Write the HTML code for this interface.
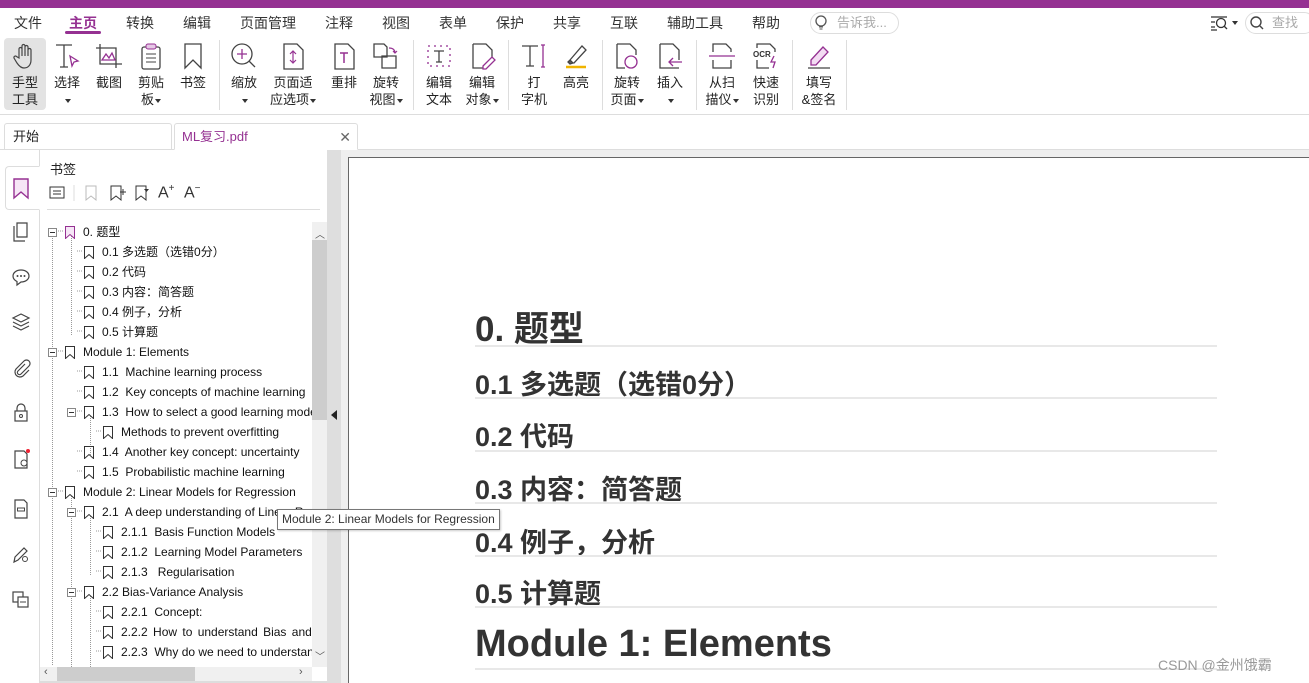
<!DOCTYPE html>
<html><head><meta charset="utf-8"><style>
*{margin:0;padding:0;box-sizing:border-box}
body{width:1309px;height:683px;overflow:hidden;position:relative;background:#fff;font-family:"Liberation Sans","Noto Sans CJK SC",sans-serif;color:#222}
.a{position:absolute}
.menu span{position:absolute;top:13px;font-size:14px;color:#333;transform:translateX(-50%);white-space:nowrap}
.rb{position:absolute;top:38px;width:42px;text-align:center;font-size:13px;line-height:17px;color:#222;transform:translateX(-50%)}
.rb svg{display:block;margin:4px auto 4px;width:28px;height:28px}
.sep{position:absolute;top:40px;width:1px;height:70px;background:#ddd}
.tri{display:inline-block;width:0;height:0;border-left:3px solid transparent;border-right:3px solid transparent;border-top:4px solid #333;vertical-align:middle;margin-left:1px}
.row{position:absolute;height:20px;font-size:12px;line-height:20px;color:#111;white-space:nowrap}
.bm{position:absolute;width:10px;height:13px;top:4px}
.ex{position:absolute;width:9px;height:9px;border:1px solid #888;background:#fff;top:6px}
.ex:after{content:"";position:absolute;left:1px;top:3px;width:5px;height:1px;background:#333}
.h{position:absolute;left:475px;font-weight:bold;color:#333;white-space:nowrap}
.ln{position:absolute;left:475px;width:742px;height:2px;background:#e8e8e8}
.li{position:absolute;left:11px;width:20px;height:20px}
</style></head><body>
<div class="a" style="left:0;top:0;width:1309px;height:8px;background:#953192"></div>
<div class="menu">
<span style="left:28px">文件</span>
<span style="left:83px;color:#953192;font-weight:bold">主页</span>
<span style="left:140px">转换</span><span style="left:197px">编辑</span><span style="left:268px">页面管理</span><span style="left:339px">注释</span><span style="left:396px">视图</span><span style="left:453px">表单</span><span style="left:510px">保护</span><span style="left:567px">共享</span><span style="left:624px">互联</span><span style="left:695px">辅助工具</span><span style="left:766px">帮助</span>
</div>
<div class="a" style="left:65px;top:31px;width:36px;height:3px;border-radius:2px;background:#953192"></div>
<div class="a" style="left:810px;top:12px;width:89px;height:22px;border:1px solid #ddd;border-radius:11px;font-size:13px;color:#aaa;padding-left:26px;line-height:20px">告诉我...</div>
<svg class="a" style="left:814px;top:15px" width="14" height="16"><circle cx="7" cy="6" r="5" fill="none" stroke="#555" stroke-width="1.3"/><path d="M5 12h4M5.5 14h3" stroke="#555"/></svg>
<svg class="a" style="left:1210px;top:15px" width="30" height="16"><path d="M1 2h16M1 7h4M1 12h4M1 15h6" stroke="#333" stroke-width="1.2"/><circle cx="11" cy="8" r="4.5" fill="none" stroke="#333" stroke-width="1.3"/><path d="M14 11l3 3" stroke="#333" stroke-width="1.3"/><path d="M22 6h6l-3 4z" fill="#333"/></svg>
<div class="a" style="left:1245px;top:12px;width:70px;height:22px;border:1px solid #ddd;border-radius:11px;font-size:13px;color:#aaa;padding-left:26px;line-height:20px">查找</div>
<svg class="a" style="left:1250px;top:16px" width="14" height="14"><circle cx="6" cy="6" r="5" fill="none" stroke="#444" stroke-width="1.4"/><path d="M10 10l3 3" stroke="#444" stroke-width="1.4"/></svg>

<div class="a" style="left:4px;top:38px;width:42px;height:72px;background:#e3e3e3;border-radius:4px"></div>
<div class="rb" style="left:25px"><svg viewBox="0 0 28 28"><path d="M8 16V7a1.5 1.5 0 013 0v7V4a1.5 1.5 0 013 0v10V5a1.5 1.5 0 013 0v9V8a1.5 1.5 0 013 0v10c0 5-3 8-7 8-3 0-5-2-7-5l-3-5a1.5 1.5 0 012.5-1.5z" fill="none" stroke="#444" stroke-width="1.2"/></svg>手型<br>工具</div>
<div class="rb" style="left:67px"><svg viewBox="0 0 28 28"><path d="M3 3h16M11 3v22M7 25h8" stroke="#444" stroke-width="1.3" fill="none"/><path d="M17 14l8 5-4 1-2 4z" fill="none" stroke="#953192" stroke-width="1.3"/></svg>选择<br><span class="tri"></span></div>
<div class="rb" style="left:109px"><svg viewBox="0 0 28 28"><path d="M5 2v20h22M1 6h20v20" stroke="#444" stroke-width="1.3" fill="none"/><path d="M7 18l4-6 3 4 3-5 3 7z" fill="none" stroke="#953192" stroke-width="1.3"/></svg>截图</div>
<div class="rb" style="left:151px"><svg viewBox="0 0 28 28"><rect x="5" y="5" width="18" height="22" rx="2" fill="none" stroke="#444" stroke-width="1.3"/><rect x="9" y="2" width="10" height="5" rx="2" fill="#e6c8e6" stroke="#953192"/><path d="M9 12h10M9 16h10M9 20h10" stroke="#444"/></svg>剪贴<br>板<span class="tri"></span></div>
<div class="rb" style="left:193px"><svg viewBox="0 0 28 28"><path d="M6 2h16v24l-8-8-8 8z" fill="none" stroke="#444" stroke-width="1.3"/></svg>书签</div>
<div class="sep" style="left:219px"></div>
<div class="rb" style="left:244px"><svg viewBox="0 0 28 28"><circle cx="12" cy="12" r="10" fill="none" stroke="#444" stroke-width="1.3"/><path d="M12 7v10M7 12h10" stroke="#953192" stroke-width="1.3"/><path d="M19 19l6 6" stroke="#444" stroke-width="1.3"/></svg>缩放<br><span class="tri"></span></div>
<div class="rb" style="left:293px;width:50px"><svg viewBox="0 0 28 28"><path d="M5 2h13l6 6v19H5z" fill="none" stroke="#444" stroke-width="1.3"/><path d="M14 9v12M11 12l3-3 3 3M11 18l3 3 3-3" fill="none" stroke="#953192" stroke-width="1.2"/></svg>页面适<br>应选项<span class="tri"></span></div>
<div class="rb" style="left:344px"><svg viewBox="0 0 28 28"><path d="M5 2h13l6 6v19H5z" fill="none" stroke="#444" stroke-width="1.3"/><path d="M10 11h8M14 11v10" stroke="#953192" stroke-width="1.5"/></svg>重排</div>
<div class="rb" style="left:386px"><svg viewBox="0 0 28 28"><path d="M2 2h10l3 3v10H2z" fill="none" stroke="#444" stroke-width="1.3"/><path d="M10 14h14v12H10z" fill="none" stroke="#444" stroke-width="1.3"/><path d="M17 6c4 0 6 2 6 5M21 9l2 2 2-2" fill="none" stroke="#953192" stroke-width="1.2"/></svg>旋转<br>视图<span class="tri"></span></div>
<div class="sep" style="left:413px"></div>
<div class="rb" style="left:439px"><svg viewBox="0 0 28 28"><rect x="3" y="4" width="22" height="20" fill="none" stroke="#953192" stroke-width="1.3" stroke-dasharray="2 4"/><path d="M9 9h10M14 9v11M11 20h6" stroke="#444" stroke-width="1.3"/></svg>编辑<br>文本</div>
<div class="rb" style="left:482px"><svg viewBox="0 0 28 28"><path d="M5 2h13l6 6v8M5 2v24h10" fill="none" stroke="#444" stroke-width="1.3"/><path d="M15 24l9-9 3 3-9 9h-3z" fill="none" stroke="#953192" stroke-width="1.3"/></svg>编辑<br>对象<span class="tri"></span></div>
<div class="sep" style="left:508px"></div>
<div class="rb" style="left:534px"><svg viewBox="0 0 28 28"><path d="M2 4h16M10 4v20M6 24h8" stroke="#444" stroke-width="1.3"/><path d="M23 3v22M21 3h4M21 25h4" stroke="#953192" stroke-width="1.3"/></svg>打<br>字机</div>
<div class="rb" style="left:576px"><svg viewBox="0 0 28 28"><path d="M8 18l12-14 4 4-12 13h-4zM6 20l2-2 3 3-3 1z" fill="none" stroke="#444" stroke-width="1.3"/><path d="M4 25h20" stroke="#f0b400" stroke-width="2.5"/></svg>高亮</div>
<div class="sep" style="left:602px"></div>
<div class="rb" style="left:627px"><svg viewBox="0 0 28 28"><path d="M4 2h13l6 6v5M4 2v24h8" fill="none" stroke="#444" stroke-width="1.3"/><circle cx="18" cy="20" r="6" fill="none" stroke="#953192" stroke-width="1.3"/></svg>旋转<br>页面<span class="tri"></span></div>
<div class="rb" style="left:670px"><svg viewBox="0 0 28 28"><path d="M4 2h13l6 6v10M4 2v24h19" fill="none" stroke="#444" stroke-width="1.3"/><path d="M26 20H13M17 16l-4 4 4 4" fill="none" stroke="#953192" stroke-width="1.3"/></svg>插入<br><span class="tri"></span></div>
<div class="sep" style="left:696px"></div>
<div class="rb" style="left:722px"><svg viewBox="0 0 28 28"><path d="M5 10V2h13l5 5v3M5 18v8h18v-8" fill="none" stroke="#444" stroke-width="1.3"/><path d="M1 14h26" stroke="#953192" stroke-width="1.3"/></svg>从扫<br>描仪<span class="tri"></span></div>
<div class="rb" style="left:766px"><svg viewBox="0 0 28 28"><path d="M5 6V2h13l5 5v3M5 18v8h12" fill="none" stroke="#444" stroke-width="1.3"/><text x="1" y="15" font-size="8" font-family="Liberation Sans" fill="#333" font-weight="bold">OCR</text><path d="M22 14l-3 6h4l-2 6" fill="none" stroke="#953192" stroke-width="1.3"/></svg>快速<br>识别</div>
<div class="sep" style="left:792px"></div>
<div class="rb" style="left:819px;width:50px"><svg viewBox="0 0 28 28"><path d="M6 18l12-13 5 5-12 13h-5z" fill="#f3dcf3" stroke="#953192" stroke-width="1.3"/><path d="M3 26h22" stroke="#444" stroke-width="1.3"/></svg>填写<br>&amp;签名</div>
<div class="sep" style="left:846px"></div>
<div class="a" style="left:0;top:114px;width:1309px;height:1px;background:#ddd"></div>

<div class="a" style="left:0;top:149px;width:1309px;height:1px;background:#ddd"></div>
<div class="a" style="left:4px;top:123px;width:168px;height:27px;border:1px solid #ddd;border-bottom:none;border-radius:3px 3px 0 0;font-size:13px;line-height:26px;padding-left:8px">开始</div>
<div class="a" style="left:174px;top:123px;width:184px;height:27px;border:1px solid #ddd;border-bottom:1px solid #fff;border-radius:3px 3px 0 0;font-size:13px;line-height:26px;padding-left:7px;color:#953192;background:#fff">ML复习.pdf<span style="position:absolute;right:6px;color:#666;font-size:14px">✕</span></div>

<div class="a" style="left:39px;top:150px;width:1px;height:533px;background:#ddd"></div>
<div class="a" style="left:5px;top:166px;width:35px;height:44px;border:1px solid #ddd;border-right:1px solid #fff;border-radius:4px 0 0 4px;background:#fff"></div>
<svg class="a" style="left:13px;top:178px" width="16" height="22"><path d="M1 1h14v19l-7-6-7 6z" fill="#f6e6f6" stroke="#953192" stroke-width="1.4"/></svg>
<svg class="li" style="top:222px" viewBox="0 0 20 20"><path d="M6 1h10v14H6zM3 4v15h11" fill="none" stroke="#444" stroke-width="1.2"/></svg>
<svg class="li" style="top:267px" viewBox="0 0 20 20"><path d="M10 3c5 0 8 3 8 6s-3 6-8 6l-4 3v-3.5C3 13 2 11 2 9c0-3 3-6 8-6z" fill="none" stroke="#444" stroke-width="1.2"/><circle cx="6.5" cy="9" r="1" fill="#444"/><circle cx="10" cy="9" r="1" fill="#444"/><circle cx="13.5" cy="9" r="1" fill="#444"/></svg>
<svg class="li" style="top:312px" viewBox="0 0 20 20"><path d="M10 2l8 4-8 4-8-4zM2 10l8 4 8-4M2 14l8 4 8-4" fill="none" stroke="#444" stroke-width="1.2"/></svg>
<svg class="li" style="top:358px" viewBox="0 0 20 20"><path d="M14 6l-7 7a2 2 0 003 3l8-8a3.5 3.5 0 00-5-5l-8 8a5 5 0 007 7l6-6" fill="none" stroke="#444" stroke-width="1.2"/></svg>
<svg class="li" style="top:402px" viewBox="0 0 20 20"><path d="M6 9V6a4 4 0 018 0v3" fill="none" stroke="#444" stroke-width="1.2"/><rect x="4" y="9" width="12" height="10" fill="none" stroke="#444" stroke-width="1.2"/><circle cx="10" cy="14" r="1.5" fill="none" stroke="#444"/></svg>
<svg class="li" style="top:449px" viewBox="0 0 20 20"><path d="M4 2h9l3 3v14H4z" fill="none" stroke="#444" stroke-width="1.2"/><circle cx="13" cy="14" r="3" fill="#fff" stroke="#444"/><circle cx="17" cy="2" r="2" fill="#e23"/></svg>
<svg class="li" style="top:499px" viewBox="0 0 20 20"><path d="M4 1h9l3 3v15H4z" fill="none" stroke="#444" stroke-width="1.2"/><rect x="6.5" y="9" width="7" height="3" fill="none" stroke="#444"/></svg>
<svg class="li" style="top:545px" viewBox="0 0 20 20"><path d="M3 17l1-5 9-9 3 3-9 9z" fill="none" stroke="#444" stroke-width="1.2"/><circle cx="14" cy="14" r="2.5" fill="none" stroke="#444"/></svg>
<svg class="li" style="top:590px" viewBox="0 0 20 20"><rect x="2" y="2" width="10" height="10" fill="none" stroke="#444" stroke-width="1.2"/><rect x="7" y="7" width="10" height="10" fill="#fff" stroke="#444" stroke-width="1.2"/><path d="M9 12h6" stroke="#444"/></svg>

<div class="a" style="left:50px;top:159px;font-size:13px">书签</div>
<svg class="a" style="left:49px;top:184px" width="160" height="18"><rect x="1" y="3" width="14" height="11" fill="none" stroke="#333"/><path d="M4 7h8M4 10h8" stroke="#333"/><path d="M25 1v16" stroke="#ddd"/><path d="M37 2h10v14l-5-4-5 4z" fill="none" stroke="#bbb"/><path d="M62 2h10v14l-5-4-5 4z" fill="none" stroke="#333"/><path d="M71 8h6M74 5v6" stroke="#333"/><path d="M87 2h10v14l-5-4-5 4z" fill="none" stroke="#333"/><path d="M95 5h5l-2.5 3z" fill="#333"/></svg>
<div class="a" style="left:158px;top:183px;font-size:16px;color:#333">A<sup style="font-size:10px">+</sup></div>
<div class="a" style="left:184px;top:183px;font-size:16px;color:#333">A<sup style="font-size:10px">−</sup></div>
<div class="a" style="left:47px;top:209px;width:273px;height:1px;background:#ddd"></div>

<div class="a" style="left:40px;top:222px;width:272px;height:445px;overflow:hidden">
<svg class="a" style="left:0;top:0" width="272" height="445">
<g stroke="#999" stroke-dasharray="1 1" fill="none">
<path d="M12.5 14v430M31.5 14v100M50.5 194v40M31.5 274v180M50.5 294v60M50.5 374v80"/>
<path d="M18 9h6M37 29h6M37 49h6M37 69h6M37 89h6M37 109h6M18 129h6M37 149h6M37 169h6M37 189h6M56 209h6M37 229h6M37 249h6M18 269h6M37 289h6M56 309h6M56 329h6M56 349h6M37 369h6M56 389h6M56 409h6M56 429h6"/>
</g></svg>
</div>
<div class="a" style="left:40px;top:222px;width:272px;height:445px;overflow:hidden">
<div class="ex" style="left:8px;top:6px"></div><svg class="bm" style="left:25px;top:4px" viewBox="0 0 10 13"><path d="M.5.5h9v12l-4.5-4-4.5 4z" fill="#f6e6f6" stroke="#953192"/></svg><div class="row" style="top:0;left:43px">0. 题型</div>
<svg class="bm" style="left:44px;top:24px" viewBox="0 0 10 13"><path d="M.5.5h9v12l-4.5-4-4.5 4z" fill="none" stroke="#333"/></svg><div class="row" style="top:20px;left:62px">0.1 多选题（选错0分）</div>
<svg class="bm" style="left:44px;top:44px" viewBox="0 0 10 13"><path d="M.5.5h9v12l-4.5-4-4.5 4z" fill="none" stroke="#333"/></svg><div class="row" style="top:40px;left:62px">0.2 代码</div>
<svg class="bm" style="left:44px;top:64px" viewBox="0 0 10 13"><path d="M.5.5h9v12l-4.5-4-4.5 4z" fill="none" stroke="#333"/></svg><div class="row" style="top:60px;left:62px">0.3 内容：简答题</div>
<svg class="bm" style="left:44px;top:84px" viewBox="0 0 10 13"><path d="M.5.5h9v12l-4.5-4-4.5 4z" fill="none" stroke="#333"/></svg><div class="row" style="top:80px;left:62px">0.4 例子，分析</div>
<svg class="bm" style="left:44px;top:104px" viewBox="0 0 10 13"><path d="M.5.5h9v12l-4.5-4-4.5 4z" fill="none" stroke="#333"/></svg><div class="row" style="top:100px;left:62px">0.5 计算题</div>
<div class="ex" style="left:8px;top:126px"></div><svg class="bm" style="left:25px;top:124px" viewBox="0 0 10 13"><path d="M.5.5h9v12l-4.5-4-4.5 4z" fill="none" stroke="#333"/></svg><div class="row" style="top:120px;left:43px">Module 1: Elements</div>
<svg class="bm" style="left:44px;top:144px" viewBox="0 0 10 13"><path d="M.5.5h9v12l-4.5-4-4.5 4z" fill="none" stroke="#333"/></svg><div class="row" style="top:140px;left:62px">1.1&nbsp; Machine learning process</div>
<svg class="bm" style="left:44px;top:164px" viewBox="0 0 10 13"><path d="M.5.5h9v12l-4.5-4-4.5 4z" fill="none" stroke="#333"/></svg><div class="row" style="top:160px;left:62px">1.2&nbsp; Key concepts of machine learning</div>
<div class="ex" style="left:27px;top:186px"></div><svg class="bm" style="left:44px;top:184px" viewBox="0 0 10 13"><path d="M.5.5h9v12l-4.5-4-4.5 4z" fill="none" stroke="#333"/></svg><div class="row" style="top:180px;left:62px">1.3&nbsp; How to select a good learning model</div>
<svg class="bm" style="left:63px;top:204px" viewBox="0 0 10 13"><path d="M.5.5h9v12l-4.5-4-4.5 4z" fill="none" stroke="#333"/></svg><div class="row" style="top:200px;left:81px">Methods to prevent overfitting</div>
<svg class="bm" style="left:44px;top:224px" viewBox="0 0 10 13"><path d="M.5.5h9v12l-4.5-4-4.5 4z" fill="none" stroke="#333"/></svg><div class="row" style="top:220px;left:62px">1.4&nbsp; Another key concept: uncertainty</div>
<svg class="bm" style="left:44px;top:244px" viewBox="0 0 10 13"><path d="M.5.5h9v12l-4.5-4-4.5 4z" fill="none" stroke="#333"/></svg><div class="row" style="top:240px;left:62px">1.5&nbsp; Probabilistic machine learning</div>
<div class="ex" style="left:8px;top:266px"></div><svg class="bm" style="left:25px;top:264px" viewBox="0 0 10 13"><path d="M.5.5h9v12l-4.5-4-4.5 4z" fill="none" stroke="#333"/></svg><div class="row" style="top:260px;left:43px">Module 2: Linear Models for Regression</div>
<div class="ex" style="left:27px;top:286px"></div><svg class="bm" style="left:44px;top:284px" viewBox="0 0 10 13"><path d="M.5.5h9v12l-4.5-4-4.5 4z" fill="none" stroke="#333"/></svg><div class="row" style="top:280px;left:62px">2.1&nbsp; A deep understanding of Linear Regression</div>
<svg class="bm" style="left:63px;top:304px" viewBox="0 0 10 13"><path d="M.5.5h9v12l-4.5-4-4.5 4z" fill="none" stroke="#333"/></svg><div class="row" style="top:300px;left:81px">2.1.1&nbsp; Basis Function Models</div>
<svg class="bm" style="left:63px;top:324px" viewBox="0 0 10 13"><path d="M.5.5h9v12l-4.5-4-4.5 4z" fill="none" stroke="#333"/></svg><div class="row" style="top:320px;left:81px">2.1.2&nbsp; Learning Model Parameters</div>
<svg class="bm" style="left:63px;top:344px" viewBox="0 0 10 13"><path d="M.5.5h9v12l-4.5-4-4.5 4z" fill="none" stroke="#333"/></svg><div class="row" style="top:340px;left:81px">2.1.3&nbsp;&nbsp; Regularisation</div>
<div class="ex" style="left:27px;top:366px"></div><svg class="bm" style="left:44px;top:364px" viewBox="0 0 10 13"><path d="M.5.5h9v12l-4.5-4-4.5 4z" fill="none" stroke="#333"/></svg><div class="row" style="top:360px;left:62px">2.2 Bias-Variance Analysis</div>
<svg class="bm" style="left:63px;top:384px" viewBox="0 0 10 13"><path d="M.5.5h9v12l-4.5-4-4.5 4z" fill="none" stroke="#333"/></svg><div class="row" style="top:380px;left:81px">2.2.1&nbsp; Concept:</div>
<svg class="bm" style="left:63px;top:404px" viewBox="0 0 10 13"><path d="M.5.5h9v12l-4.5-4-4.5 4z" fill="none" stroke="#333"/></svg><div class="row" style="top:400px;left:81px;word-spacing:2px">2.2.2 How to understand Bias and Variance</div>
<svg class="bm" style="left:63px;top:424px" viewBox="0 0 10 13"><path d="M.5.5h9v12l-4.5-4-4.5 4z" fill="none" stroke="#333"/></svg><div class="row" style="top:420px;left:81px">2.2.3&nbsp; Why do we need to understand</div>
</div>
<div class="a" style="left:312px;top:222px;width:15px;height:445px;background:#f0f0f0"></div>
<div class="a" style="left:312px;top:240px;width:15px;height:180px;background:#cdcdcd"></div>
<div class="a" style="left:315px;top:226px;font-size:10px;color:#555">︿</div>
<div class="a" style="left:315px;top:648px;font-size:10px;color:#555">﹀</div>
<div class="a" style="left:40px;top:667px;width:272px;height:14px;background:#f0f0f0"></div>
<div class="a" style="left:57px;top:667px;width:138px;height:14px;background:#cdcdcd"></div>
<div class="a" style="left:44px;top:666px;font-size:11px;color:#555">‹</div>
<div class="a" style="left:299px;top:666px;font-size:11px;color:#555">›</div>
<div class="a" style="left:40px;top:681px;width:287px;height:2px;background:#ddd"></div>

<div class="a" style="left:327px;top:150px;width:14px;height:533px;background:#dedede"></div>
<div class="a" style="left:331px;top:410px;width:0;height:0;border-top:5px solid transparent;border-bottom:5px solid transparent;border-right:6px solid #222"></div>
<div class="a" style="left:341px;top:150px;width:968px;height:533px;background:#efefef"></div>
<div class="a" style="left:348px;top:157px;width:961px;height:526px;background:#fff;border-left:1px solid #666;border-top:1px solid #666"></div>

<div class="h" style="top:301px;font-size:35px">0. 题型</div><div class="ln" style="top:345px"></div>
<div class="h" style="top:363px;font-size:27px">0.1 多选题（选错0分）</div><div class="ln" style="top:397px"></div>
<div class="h" style="top:415px;font-size:27px">0.2 代码</div><div class="ln" style="top:450px"></div>
<div class="h" style="top:468px;font-size:27px">0.3 内容：简答题</div><div class="ln" style="top:502px"></div>
<div class="h" style="top:521px;font-size:27px">0.4 例子，分析</div><div class="ln" style="top:555px"></div>
<div class="h" style="top:572px;font-size:27px">0.5 计算题</div><div class="ln" style="top:606px"></div>
<div class="h" style="top:623px;font-size:38px">Module 1: Elements</div><div class="ln" style="top:668px"></div>
<div class="a" style="left:1158px;top:655px;font-size:14px;color:#999">CSDN @金州饿霸</div>

<div class="a" style="left:277px;top:509px;padding:0 4px;height:21px;border:1px solid #777;background:#fff;font-size:12px;line-height:19px;color:#333;white-space:nowrap;box-shadow:1px 1px 2px rgba(0,0,0,.2)">Module 2: Linear Models for Regression</div>
</body></html>
